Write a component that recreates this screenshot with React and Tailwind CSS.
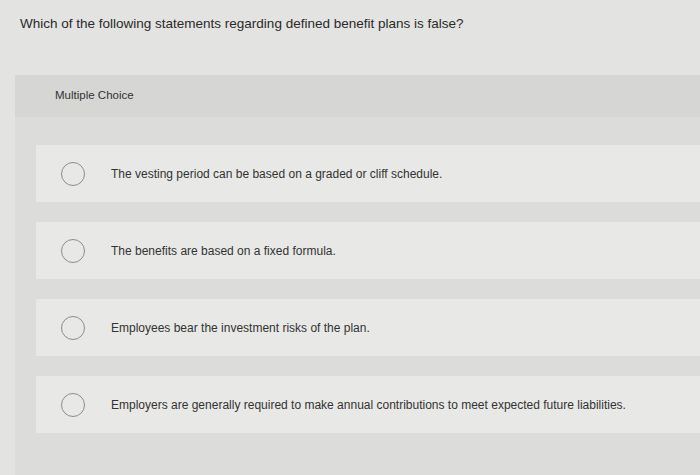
const options = [
  "The vesting period can be based on a graded or cliff schedule.",
  "The benefits are based on a fixed formula.",
  "Employees bear the investment risks of the plan.",
  "Employers are generally required to make annual contributions to meet expected future liabilities.",
];

function Radio() {
  return (
    <span className="block w-[24px] h-[24px] rounded-full border-[1.5px] border-[#8c8c8c] shrink-0" />
  );
}

export default function App() {
  return (
    <div className="min-h-[475px] bg-[#e3e3e1] pt-[15px] font-['Liberation_Sans',Arial,sans-serif] overflow-hidden">
      <p className="pl-[20px] text-[13.5px] leading-[17px] text-[#2a2a2a]">
        Which of the following statements regarding defined benefit plans is false?
      </p>

      <div className="ml-[15px] mt-[43px] bg-[#dcdcda] pb-[42px]">
        <div className="h-[42px] bg-[#d6d6d4] pl-[40px] flex items-center">
          <span className="text-[11.5px] text-[#333]">Multiple Choice</span>
        </div>

        <div className="pt-[28px] pl-[21px] flex flex-col gap-[20px]">
          {options.map((text) => (
            <div key={text} className="h-[57px] bg-[#e8e8e6] flex items-center pl-[25px]">
              <Radio />
              <span className="ml-[26px] text-[12px] text-[#333]">{text}</span>
            </div>
          ))}
        </div>
      </div>
    </div>
  );
}
